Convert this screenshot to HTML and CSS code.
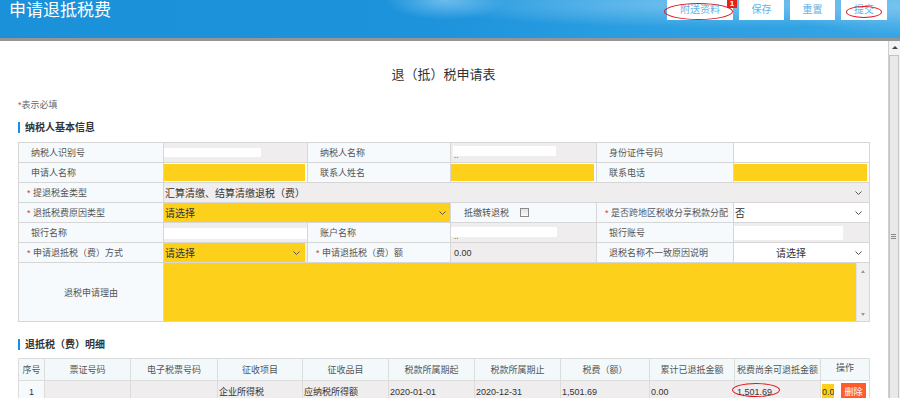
FILE: index.html
```html
<!DOCTYPE html>
<html lang="zh-CN">

<head>
    <meta charset="UTF-8" />
    <meta name="viewport" content="width=device-width, initial-scale=1.0" />
    <title>申请退抵税费</title>
    <link rel="stylesheet" href="styles.css">
</head>

<body>
    <!-- Top bar -->
    <div class="topbar">
        <h1 class="app-title">申请退抵税费</h1>
        <div class="actions">
            <button class="btn btn-attach">附送资料<span class="badge">1</span></button>
            <button class="btn btn-save">保存</button>
            <button class="btn btn-reset">重置</button>
            <button class="btn btn-submit">提交</button>
        </div>
    </div>

    <div class="main">
        <div class="content">
            <h2 class="form-title">退（抵）税申请表</h2>
            <p class="note"><span class="star">*</span>表示必填</p>

            <h3 class="section">纳税人基本信息</h3>
            <table class="form">
                <colgroup>
                    <col class="fc1"><col class="fc2"><col class="fc3"><col class="fc4"><col class="fc5"><col class="fc6">
                </colgroup>
                <tr>
                    <td class="lbl">纳税人识别号</td>
                    <td class="val"><span class="mask mask-id"></span></td>
                    <td class="lbl">纳税人名称</td>
                    <td class="val"><span class="mask mask-name"></span><span class="dots">..</span></td>
                    <td class="lbl">身份证件号码</td>
                    <td class="val blank"></td>
                </tr>
                <tr>
                    <td class="lbl">申请人名称</td>
                    <td class="val blank"><div class="inp"></div></td>
                    <td class="lbl">联系人姓名</td>
                    <td class="val blank"><div class="inp"></div></td>
                    <td class="lbl">联系电话</td>
                    <td class="val blank"><div class="inp"></div></td>
                </tr>
                <tr>
                    <td class="lbl req"><span class="star">*</span> 提退税金类型</td>
                    <td class="val" colspan="5">
                        <div class="select">汇算清缴、结算清缴退税（费）<svg class="chev" width="7" height="4" viewBox="0 0 7 4"><polyline points="0.5,0.5 3.5,3.5 6.5,0.5" /></svg></div>
                    </td>
                </tr>
                <tr>
                    <td class="lbl req"><span class="star">*</span> 退抵税费原因类型</td>
                    <td class="val" colspan="2">
                        <div class="select yellow">请选择<svg class="chev" width="7" height="4" viewBox="0 0 7 4"><polyline points="0.5,0.5 3.5,3.5 6.5,0.5" /></svg></div>
                    </td>
                    <td class="lbl plain">抵缴转退税<span class="check"></span></td>
                    <td class="lbl req"><span class="star">*</span> 是否跨地区税收分享税款分配</td>
                    <td class="val">
                        <div class="select white">否<svg class="chev" width="7" height="4" viewBox="0 0 7 4"><polyline points="0.5,0.5 3.5,3.5 6.5,0.5" /></svg></div>
                    </td>
                </tr>
                <tr>
                    <td class="lbl">银行名称</td>
                    <td class="val"><span class="mask mask-bank"></span></td>
                    <td class="lbl">账户名称</td>
                    <td class="val"><span class="mask mask-acct"></span><span class="dots">..</span></td>
                    <td class="lbl">银行账号</td>
                    <td class="val"><span class="mask mask-no"></span></td>
                </tr>
                <tr>
                    <td class="lbl req"><span class="star">*</span> 申请退抵税（费）方式</td>
                    <td class="val">
                        <div class="select yellow short">请选择<svg class="chev" width="7" height="4" viewBox="0 0 7 4"><polyline points="0.5,0.5 3.5,3.5 6.5,0.5" /></svg></div>
                    </td>
                    <td class="lbl req"><span class="star">*</span> 申请退抵税（费）额</td>
                    <td class="val"><div class="text">0.00</div></td>
                    <td class="lbl">退税名称不一致原因说明</td>
                    <td class="val">
                        <div class="select white centered"><span>请选择</span><svg class="chev" width="7" height="4" viewBox="0 0 7 4"><polyline points="0.5,0.5 3.5,3.5 6.5,0.5" /></svg></div>
                    </td>
                </tr>
                <tr class="tall">
                    <td class="lbl center">退税申请理由</td>
                    <td class="val" colspan="5">
                        <div class="textarea">
                            <div class="textarea-body"></div>
                            <div class="mini-scroll">
                                <span class="tri up"></span>
                                <span class="tri down"></span>
                            </div>
                        </div>
                    </td>
                </tr>
            </table>

            <h3 class="section second">退抵税（费）明细</h3>
            <table class="detail">
                <colgroup>
                    <col class="dc1"><col class="dc2"><col class="dc3"><col class="dc4"><col class="dc5"><col class="dc6">
                    <col class="dc7"><col class="dc8"><col class="dc9"><col class="dc10"><col class="dc11">
                </colgroup>
                <tr class="head">
                    <th>序号</th>
                    <th>票证号码</th>
                    <th>电子税票号码</th>
                    <th>征收项目</th>
                    <th>征收品目</th>
                    <th>税款所属期起</th>
                    <th>税款所属期止</th>
                    <th>税费（额）</th>
                    <th>累计已退抵金额</th>
                    <th>税费尚余可退抵金额</th>
                    <th class="op-head">操作</th>
                </tr>
                <tr class="row">
                    <td class="num">1</td>
                    <td></td>
                    <td></td>
                    <td>企业所得税</td>
                    <td>应纳税所得额</td>
                    <td>2020-01-01</td>
                    <td>2020-12-31</td>
                    <td>1,501.69</td>
                    <td>0.00</td>
                    <td class="rest"><span class="circled">1,501.69</span></td>
                    <td class="op">
                        <div class="op-wrap"><span class="amount">0.0</span><button class="del">删除</button></div>
                    </td>
                </tr>
            </table>
        </div>

        <!-- Page scrollbar -->
        <div class="scrollbar">
            <div class="sb-up"></div>
            <div class="sb-thumb"><span class="grip"></span></div>
        </div>
    </div>
</body>

</html>
```

FILE: styles.css
```css
body {
    margin: 0;
    height: 398px;
    overflow: hidden;
    font-family: "Liberation Sans", "Noto Sans CJK SC", sans-serif;
    background: #fff;
    color: #333;
}

/* Top bar */
.topbar {
    height: 38px;
    border-bottom: 3px solid #959595;
    display: flex;
    justify-content: space-between;
    align-items: flex-start;
    background:
        radial-gradient(ellipse 300px 24px at 720px 4px, rgba(125, 198, 240, 0.9), rgba(125, 198, 240, 0) 100%),
        radial-gradient(ellipse 120px 30px at 900px 6px, rgba(130, 200, 240, 0.8), rgba(130, 200, 240, 0) 100%),
        radial-gradient(ellipse 60px 20px at 445px 0, rgba(140, 205, 242, 0.7), rgba(140, 205, 242, 0) 100%),
        linear-gradient(to right, #1b91da 0%, #1d93dc 48%, #2a9ee1 70%, #35a5e4 100%);
}

.app-title {
    margin: 0;
    padding-left: 9px;
    font-size: 17px;
    line-height: 22px;
    font-weight: normal;
    color: #fff;
}

.actions {
    display: flex;
    gap: 6px;
    padding-right: 13px;
}

.btn {
    position: relative;
    height: 20px;
    padding: 0;
    border: none;
    background: #fff;
    color: #62b2e8;
    font-family: "Liberation Sans", "Noto Sans CJK SC", sans-serif;
    font-size: 10px;
    line-height: 20px;
    cursor: pointer;
}

.btn-attach { width: 66px; }
.btn-save { width: 45px; }
.btn-reset { width: 45px; }
.btn-submit { width: 46px; }

.badge {
    position: absolute;
    top: 0;
    right: -4px;
    width: 10px;
    height: 8px;
    background: #e3231b;
    color: #fff;
    font-size: 8px;
    line-height: 8px;
    font-weight: bold;
    text-align: center;
}

/* red marks drawn on the screenshot */
.btn-attach::after,
.btn-submit::after,
.circled::after {
    content: "";
    position: absolute;
    box-sizing: border-box;
    border: 1.5px solid #e0141e;
    border-radius: 50%;
}

.btn-attach::after {
    left: -3px;
    top: 3px;
    width: 69px;
    height: 17px;
}

.btn-submit::after {
    left: 5px;
    top: 6px;
    width: 36px;
    height: 12px;
}

/* Main area */
.main {
    display: flex;
    height: 357px;
    overflow: hidden;
}

.content {
    flex: 1;
    min-width: 0;
    padding: 0 19px 0 18px;
}

.form-title {
    margin: 25px 0 0;
    text-align: center;
    font-size: 13px;
    line-height: 18px;
    font-weight: normal;
    color: #333;
}

.note {
    margin: 14px 0 0;
    font-size: 9px;
    line-height: 14px;
    color: #666;
}

.star {
    color: #e8322c;
}

.section {
    margin: 10px 0 0;
    padding-left: 5px;
    border-left: 2px solid #1a8de0;
    font-size: 10px;
    line-height: 11px;
    font-weight: bold;
    color: #333;
}

.section.second {
    margin-top: 17px;
}

/* Basic info form */
table {
    border-collapse: collapse;
    table-layout: fixed;
    width: 851px;
}

.form {
    margin-top: 9px;
}

.fc1 { width: 145px; }
.fc2 { width: 144px; }
.fc3 { width: 143px; }
.fc4 { width: 146px; }
.fc5 { width: 137px; }
.fc6 { width: 136px; }

.form td {
    height: 19px;
    padding: 0;
    border: 1px solid #d6d6d6;
    font-size: 9px;
    color: #555;
    white-space: nowrap;
    overflow: hidden;
}

.form .tall td {
    height: 58px;
}

.lbl {
    background: #f6fafc;
    padding-left: 12px !important;
}

.lbl.req {
    padding-left: 8px !important;
}

.lbl.plain {
    padding-left: 13px !important;
}

.lbl.center {
    text-align: center;
    padding-left: 0 !important;
}

.val {
    background: #efeded;
}

.val.blank {
    background: #fff;
}

.inp {
    height: 17px;
    margin: 1px 2px 1px 0;
    background: #fdd11b;
}

.select {
    display: flex;
    align-items: center;
    justify-content: space-between;
    height: 19px;
    padding: 0 7px 0 1px;
    font-size: 10px;
    color: #333;
}

.select.yellow {
    background: #fdd11b;
    padding-right: 4px;
}

.select.short {
    margin-right: 2px;
    padding-right: 5px;
}

.select.white {
    background: #fff;
}

.select.centered {
    padding-left: 42px;
}

.chev {
    flex-shrink: 0;
}

.chev polyline {
    fill: none;
    stroke: #555;
    stroke-width: 1;
}

.text {
    padding-left: 3px;
    font-size: 9px;
    color: #333;
}

.check {
    display: inline-block;
    width: 7px;
    height: 7px;
    margin-left: 11px;
    vertical-align: -1px;
    border: 1px solid #8a8a8a;
    background: linear-gradient(#e2e2e2, #fafafa);
}

.mask {
    display: block;
    background: #fff;
}

.mask-id { width: 97px; height: 9px; }
.mask-name { width: 103px; height: 10px; margin: 1px 0 0 2px; }
.mask-bank { width: 144px; height: 11px; margin-top: 1px; }
.mask-acct { width: 106px; height: 10px; margin-top: 2px; }
.mask-no { width: 109px; height: 14px; }

.dots {
    display: block;
    height: 4px;
    margin-left: 3px;
    font-size: 8px;
    line-height: 0;
    color: #333;
}

.textarea {
    display: flex;
    height: 58px;
}

.textarea-body {
    flex: 1;
    background: #fdd11b;
}

.mini-scroll {
    width: 13px;
    background: #f1f1f1;
    border-left: 1px solid #e2e2e2;
    display: flex;
    flex-direction: column;
    justify-content: space-between;
    align-items: center;
    padding: 7px 0 5px;
    box-sizing: border-box;
}

.tri {
    width: 0;
    height: 0;
    border-left: 2.5px solid transparent;
    border-right: 2.5px solid transparent;
}

.tri.up {
    border-bottom: 3px solid #9a9a9a;
}

.tri.down {
    border-top: 3px solid #9a9a9a;
}

/* Detail table */
.detail {
    margin-top: 8px;
}

.dc1 { width: 26px; }
.dc2 { width: 86px; }
.dc3 { width: 87px; }
.dc4 { width: 85px; }
.dc5 { width: 86px; }
.dc6 { width: 86px; }
.dc7 { width: 86px; }
.dc8 { width: 89px; }
.dc9 { width: 85px; }
.dc10 { width: 86px; }
.dc11 { width: 49px; }

.detail th,
.detail td {
    padding: 0;
    border: 1px solid #dcdcdc;
    font-size: 9px;
    font-weight: normal;
    white-space: nowrap;
    overflow: hidden;
}

.detail th {
    height: 19px;
    background: #f3f9fb;
    color: #555;
    text-align: center;
}

.detail th.op-head {
    vertical-align: top;
    padding-top: 2px;
}

.detail td {
    height: 21px;
    padding-left: 1px;
    background: #efeded;
    color: #333;
}

.detail td.num {
    text-align: center;
    padding-left: 0;
    background: #f7fafc;
}

.detail td.rest {
    overflow: visible;
    padding-left: 2px;
}

.circled {
    position: relative;
}

.circled::after {
    left: -5px;
    top: -4px;
    width: 48px;
    height: 14px;
}

.detail td.op {
    background: #fff;
}

.op-wrap {
    display: flex;
    align-items: center;
    gap: 7px;
}

.amount {
    width: 12px;
    height: 16px;
    background: #fdd11b;
    font-size: 9px;
    line-height: 16px;
    overflow: hidden;
}

.del {
    width: 25px;
    height: 18px;
    padding: 0;
    border: none;
    background: #ff5b2b;
    color: #fff;
    font-family: "Liberation Sans", "Noto Sans CJK SC", sans-serif;
    font-size: 9px;
    cursor: pointer;
}

/* Page scrollbar */
.scrollbar {
    width: 11px;
    border-left: 1px solid #cfcfcf;
    background: #f3f3f3;
    display: flex;
    flex-direction: column;
    align-items: center;
}

.sb-up {
    width: 0;
    height: 0;
    margin-top: 5px;
    border-left: 3px solid transparent;
    border-right: 3px solid transparent;
    border-bottom: 3px solid #444;
}

.sb-thumb {
    flex-shrink: 0;
    width: 8px;
    height: 360px;
    margin-top: 6px;
    margin-right: 2px;
    border: 1px solid #c4c4c4;
    background: #e9e9e9;
    display: flex;
    align-items: center;
    justify-content: center;
}

.grip {
    width: 5px;
    height: 5px;
    background: repeating-linear-gradient(#888 0, #888 1px, transparent 1px, transparent 2px);
}
```
